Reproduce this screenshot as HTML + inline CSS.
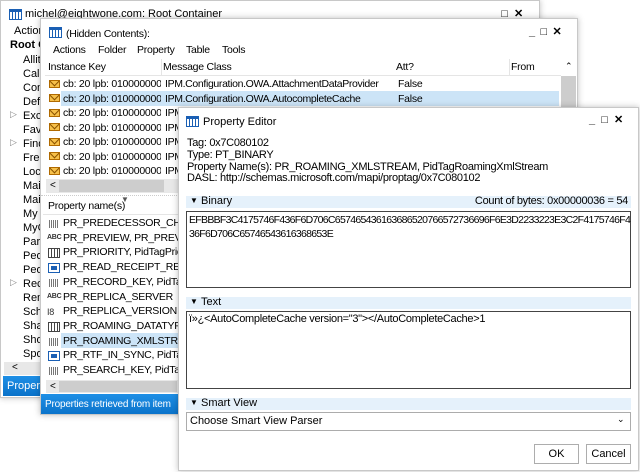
<!DOCTYPE html>
<html><head><meta charset="utf-8"><style>
*{margin:0;padding:0;box-sizing:border-box}
body{width:640px;height:472px;overflow:hidden;background:#fff;font-family:"Liberation Sans",sans-serif;font-size:11px;color:#000;position:relative}
.a{position:absolute;white-space:nowrap}
.c{overflow:hidden}
.win{position:absolute;background:#fff;border:1px solid #c8c8c8;box-shadow:0 0 6px rgba(0,0,0,.25);overflow:hidden}
.ic{position:absolute;width:13px;height:11px;border:1px solid #1a5fb4;background:repeating-linear-gradient(90deg,#fff 0 2px,#1a5fb4 2px 3px);}
.ic:before{content:"";position:absolute;left:0;right:0;top:0;height:2px;background:#1a5fb4}
.btns{position:absolute;font-size:11px;font-weight:bold}
.env{position:absolute;width:11px;height:8px;border:1px solid #b06a00;background:#f6c04a}
.env:after{content:"";position:absolute;left:1px;top:-3px;width:6px;height:6px;border-right:1px solid #8a5200;border-bottom:1px solid #8a5200;transform:rotate(45deg)}
.hdr{position:absolute;background:#e5f1fb;height:12px}
.blue{position:absolute;background:linear-gradient(#1e8fe6,#0a72c9);color:#fff;overflow:hidden;white-space:nowrap}
.pi{position:absolute;width:12px;height:10px;font-size:8px;font-weight:bold;color:#333}
.grid{background:repeating-linear-gradient(90deg,#777 0 1px,#fff 1px 2px);height:8px;width:10px}
.sm{font-size:10.5px;letter-spacing:-0.25px}
</style></head><body>

<!-- Window 1 -->
<div class="win" style="left:0;top:0;width:540px;height:398px">
  <div class="ic" style="left:8px;top:8px"></div>
  <div class="a" style="left:24px;top:7px">michel@eightwone.com: Root Container</div>
  <div class="btns a" style="left:488px;top:6px">_&nbsp;&nbsp;&#9633;&nbsp;&nbsp;&#x2715;</div>
  <div class="a" style="left:13px;top:24px">Action</div>
  <div class="a" style="left:9px;top:38px;font-weight:bold">Root C</div>
  <div class="a" style="left:22px;top:52px;line-height:14px">Allit<br>Cale<br>Con<br>Defe<br>Exch<br>Favo<br>Find<br>Free<br>Loca<br>Mail<br>Mail<br>My<br>MyC<br>Park<br>Peop<br>Peop<br>Reco<br>Rem<br>Sche<br>Shar<br>Shor<br>Spo</div>
  <div class="a" style="left:9px;top:108px;color:#888;font-size:9px">&#9655;</div>
  <div class="a" style="left:9px;top:136px;color:#888;font-size:9px">&#9655;</div>
  <div class="a" style="left:9px;top:276px;color:#888;font-size:9px">&#9655;</div>
  <div class="a" style="left:3px;top:361px;width:38px;height:13px;background:#e8e8e8;font-size:10px;padding-left:8px">&lt;</div>
  <div class="blue" style="left:2px;top:375px;width:40px;height:20px;padding:4px 4px">Properti</div>
</div>

<!-- Window 2 -->
<div class="win sm" style="left:40px;top:18px;width:538px;height:397px">
  <div class="ic" style="left:8px;top:8px"></div>
  <div class="a" style="left:25px;top:9px">(Hidden Contents):</div>
  <div class="btns a" style="left:488px;top:6px">_&nbsp;&nbsp;&#9633;&nbsp;&nbsp;&#x2715;</div>
  <div class="a" style="left:12px;top:25px">Actions</div>
  <div class="a" style="left:57px;top:25px">Folder</div>
  <div class="a" style="left:96px;top:25px">Property</div>
  <div class="a" style="left:145px;top:25px">Table</div>
  <div class="a" style="left:181px;top:25px">Tools</div>
  <div class="a" style="left:4px;top:40px;width:516px;height:17px;border-bottom:1px solid #e5e5e5"></div>
  <div class="a" style="left:120px;top:40px;width:1px;height:17px;background:#e5e5e5"></div>
  <div class="a" style="left:468px;top:40px;width:1px;height:17px;background:#e5e5e5"></div>
  <div class="a" style="left:7px;top:42px">Instance Key</div>
  <div class="a" style="left:122px;top:42px">Message Class</div>
  <div class="a" style="left:355px;top:42px">Att?</div>
  <div class="a" style="left:470px;top:42px">From</div>
  <div class="a" style="left:524px;top:42px;font-size:9px">&#8963;</div>
  <div class="a" style="left:520px;top:57px;width:15px;height:50px;background:#cdcdcd"></div>
  <div class="a" style="left:20px;top:72px;width:498px;height:15px;background:#cce4f7"></div>
  <div class="a c" style="left:22px;top:58px;width:98px;line-height:14.5px">cb: 20 lpb: 0100000000...<br>cb: 20 lpb: 0100000000...<br>cb: 20 lpb: 0100000000...<br>cb: 20 lpb: 0100000000...<br>cb: 20 lpb: 0100000000...<br>cb: 20 lpb: 0100000000...<br>cb: 20 lpb: 0100000000...</div>
  <div class="env" style="left:8px;top:61px"></div><div class="env" style="left:8px;top:75px"></div><div class="env" style="left:8px;top:90px"></div><div class="env" style="left:8px;top:104px"></div><div class="env" style="left:8px;top:119px"></div><div class="env" style="left:8px;top:133px"></div><div class="env" style="left:8px;top:148px"></div>
  <div class="a c" style="left:124px;top:58px;width:228px;line-height:14.5px;letter-spacing:-0.35px">IPM.Configuration.OWA.AttachmentDataProvider<br>IPM.Configuration.OWA.AutocompleteCache<br>IPM<br>IPM<br>IPM<br>IPM<br>IPM</div>
  <div class="a" style="left:357px;top:58px;line-height:14.5px">False<br>False</div>
  <div class="a" style="left:5px;top:160px;width:133px;height:14px;background:#e8e8e8;font-size:10px;padding:0 4px;line-height:14px">&lt;</div>
  <div class="a" style="left:18px;top:161px;width:105px;height:12px;background:#cdcdcd"></div>
  <div class="a" style="left:0;top:176px;width:140px;border-top:1px dotted #ccc"></div>
  <div class="a" style="left:80px;top:176px;font-size:8px;color:#555">&#9660;</div>
  <div class="a" style="left:7px;top:181px">Property name(s)</div>
  <div class="a" style="left:2px;top:195px;width:136px;border-top:1px solid #e5e5e5"></div>
  <div class="a" style="left:20px;top:314px;width:118px;height:15px;background:#cce4f7"></div>
  <div class="a c" style="left:22px;top:197px;width:116px;height:164px;line-height:14.7px">PR_PREDECESSOR_CHANGE_<br>PR_PREVIEW, PR_PREVIEW_A<br>PR_PRIORITY, PidTagPriority<br>PR_READ_RECEIPT_REQUEST<br>PR_RECORD_KEY, PidTagRec<br>PR_REPLICA_SERVER<br>PR_REPLICA_VERSION<br>PR_ROAMING_DATATYPES,<br>PR_ROAMING_XMLSTREAM,<br>PR_RTF_IN_SYNC, PidTagRtf<br>PR_SEARCH_KEY, PidTagSea<br>PR_</div>
  <div class="pi grid" style="left:8px;top:201px"></div>
  <div class="pi" style="left:6px;top:215px;font-size:7px">ABC</div>
  <div class="pi" style="left:7px;top:229px;border:1px solid #444;background:repeating-linear-gradient(90deg,#fff 0 2px,#444 2px 3px)"></div>
  <div class="pi" style="left:7px;top:244px;border:1px solid #1a5fb4;background:#fff"><div style="margin:2px;height:4px;background:#1a5fb4"></div></div>
  <div class="pi grid" style="left:8px;top:260px"></div>
  <div class="pi" style="left:6px;top:274px;font-size:7px">ABC</div>
  <div class="pi" style="left:6px;top:288px;font-size:9px;font-weight:normal">I8</div>
  <div class="pi" style="left:7px;top:303px;border:1px solid #444;background:repeating-linear-gradient(90deg,#fff 0 2px,#444 2px 3px)"></div>
  <div class="pi grid" style="left:8px;top:319px"></div>
  <div class="pi" style="left:7px;top:332px;border:1px solid #1a5fb4;background:#fff"><div style="margin:2px;height:4px;background:#1a5fb4"></div></div>
  <div class="pi grid" style="left:8px;top:348px"></div>
  <div class="a" style="left:5px;top:361px;width:133px;height:13px;background:#e8e8e8;font-size:10px;padding:0 4px;line-height:13px">&lt;</div>
  <div class="a" style="left:18px;top:362px;width:118px;height:11px;background:#cdcdcd"></div>
  <div class="blue" style="left:0;top:375px;width:138px;height:21px;padding:5px 4px;font-size:10px;letter-spacing:-0.2px">Properties retrieved from item</div>
</div>

<!-- Window 3 -->
<div class="win" style="left:178px;top:107px;width:461px;height:364px">
  <div class="ic" style="left:7px;top:8px"></div>
  <div class="a" style="left:24px;top:8px">Property Editor</div>
  <div class="btns a" style="left:410px;top:5px">_&nbsp;&nbsp;&#9633;&nbsp;&nbsp;&#x2715;</div>
  <div class="a" style="left:8px;top:30px;line-height:11.8px;letter-spacing:-0.3px">Tag: 0x7C080102<br>Type: PT_BINARY<br>Property Name(s): PR_ROAMING_XMLSTREAM, PidTagRoamingXmlStream<br>DASL: http://schemas.microsoft.com/mapi/proptag/0x7C080102</div>
  <div class="hdr" style="left:7px;top:88px;width:445px"></div>
  <div class="a" style="left:11px;top:88px;font-size:8px">&#9660;</div>
  <div class="a" style="left:22px;top:87px">Binary</div>
  <div class="a" style="right:10px;top:87px;letter-spacing:-0.3px">Count of bytes: 0x00000036 = 54</div>
  <div class="a" style="left:7px;top:103px;width:445px;height:77px;border:1px solid #444"></div>
  <div class="a" style="left:10px;top:105px;font-size:10.5px;letter-spacing:-0.7px;line-height:14px">EFBBBF3C4175746F436F6D706C657465436163686520766572736696F6E3D2233223E3C2F4175746F4<br>36F6D706C65746543616368653E</div>
  <div class="hdr" style="left:7px;top:189px;width:445px"></div>
  <div class="a" style="left:11px;top:189px;font-size:8px">&#9660;</div>
  <div class="a" style="left:22px;top:188px">Text</div>
  <div class="a" style="left:7px;top:203px;width:445px;height:78px;border:1px solid #444"></div>
  <div class="a" style="left:10px;top:205px;letter-spacing:-0.3px">ï»¿&lt;AutoCompleteCache version="3"&gt;&lt;/AutoCompleteCache&gt;1</div>
  <div class="hdr" style="left:7px;top:290px;width:445px"></div>
  <div class="a" style="left:11px;top:290px;font-size:8px">&#9660;</div>
  <div class="a" style="left:22px;top:289px">Smart View</div>
  <div class="a" style="left:7px;top:304px;width:445px;height:19px;border:1px solid #acacac"></div>
  <div class="a" style="left:11px;top:307px">Choose Smart View Parser</div>
  <div class="a" style="left:438px;top:306px;font-size:9px">&#8964;</div>
  <div class="a" style="left:355px;top:336px;width:45px;height:20px;border:1px solid #adadad;text-align:center;line-height:18px">OK</div>
  <div class="a" style="left:407px;top:336px;width:45px;height:20px;border:1px solid #adadad;text-align:center;line-height:18px">Cancel</div>
</div>
</body></html>
